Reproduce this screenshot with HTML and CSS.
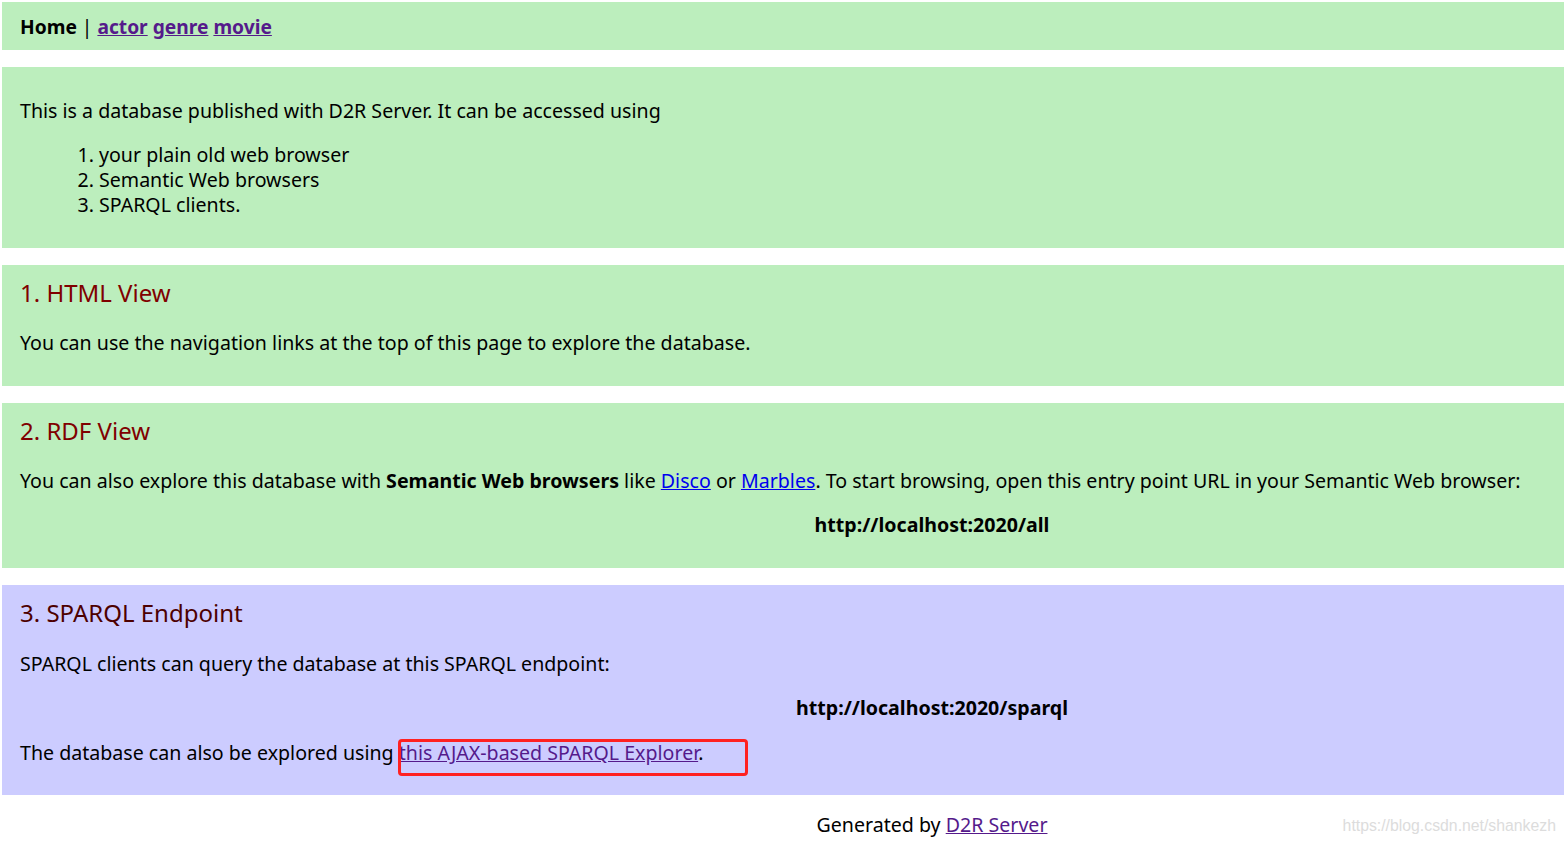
FILE: index.html
```html
<!DOCTYPE html>
<html lang="en">
<head>
    <meta charset="UTF-8">
    <title>D2R Server</title>
    <link rel="stylesheet" href="styles.css">
</head>
<body>
    <div class="topbar">
        <strong>Home</strong> | <a href="#" class="visited">actor</a> <a href="#" class="visited">genre</a> <a href="#" class="visited">movie</a>
    </div>

    <div class="section intro">
        <p class="first">This is a database published with D2R Server. It can be accessed using</p>
        <ol>
            <li>your plain old web browser</li>
            <li>Semantic Web browsers</li>
            <li>SPARQL clients.</li>
        </ol>
    </div>

    <div class="section">
        <h2>1. HTML View</h2>
        <p>You can use the navigation links at the top of this page to explore the database.</p>
    </div>

    <div class="section">
        <h2>2. RDF View</h2>
        <p>You can also explore this database with <strong>Semantic Web browsers</strong> like <a href="#">Disco</a> or <a href="#">Marbles</a>. To start browsing, open this entry point URL in your Semantic Web browser:</p>
        <p class="url">http://localhost:2020/all</p>
    </div>

    <div class="section sparql">
        <h2>3. SPARQL Endpoint</h2>
        <p>SPARQL clients can query the database at this SPARQL endpoint:</p>
        <p class="url">http://localhost:2020/sparql</p>
        <p>The database can also be explored using <span class="marked"><a href="#" class="visited">this AJAX-based SPARQL Explorer</a>.</span></p>
    </div>

    <div class="footer">
        Generated by <a href="#" class="visited">D2R Server</a>
        <span class="watermark">https://blog.csdn.net/shankezh</span>
    </div>
</body>
</html>
```

FILE: styles.css
```css
body {
    margin: 2px 0 0 2px;
    font-family: "Noto Sans", "Open Sans", sans-serif;
    font-size: 19.6px;
    line-height: 25px;
    color: #000;
    background: #fff;
}
a { color: #0000ee; }
a.visited { color: #551a8b; }

.topbar {
    background: #bceebd;
    height: 48px;
    line-height: 50px;
    padding: 0 18px;
    font-size: 19.2px;
    margin-bottom: 17px;
}
.topbar strong { color: #000; }
.topbar a { font-weight: bold; }

.section {
    background: #bceebd;
    padding: 12px 18px 12px;
    margin-bottom: 17px;
}
.section.sparql {
    background: #ccccff;
    padding-bottom: 11px;
    margin-bottom: 0;
}
.section h2 {
    margin: 0 0 21px;
    font-size: 24px;
    line-height: 32px;
    font-weight: normal;
    color: #800000;
}
.section.sparql h2 {
    margin-bottom: 22px;
    color: #4d0000;
}
.section p {
    margin: 0 0 19px;
}
.intro p.first { margin-top: 19px; }
.intro ol {
    margin: 0 0 19px;
    padding-left: 79px;
}
.section p.url {
    font-weight: bold;
    text-align: center;
    padding-left: 298px;
}
.section p.url + p { margin-top: 20px; }

.marked { position: relative; }
.marked::after {
    content: "";
    position: absolute;
    left: -1px;
    right: -45px;
    top: 0;
    height: 31px;
    border: 3px solid #ff2121;
    border-radius: 4px;
}

.footer {
    position: relative;
    text-align: center;
    padding: 17px 0 0 298px;
    line-height: 25px;
}
.watermark {
    position: absolute;
    right: 8px;
    top: 18px;
    font-family: "Liberation Sans", Arial, sans-serif;
    font-size: 15.8px;
    color: #dcdcdc;
}
```
